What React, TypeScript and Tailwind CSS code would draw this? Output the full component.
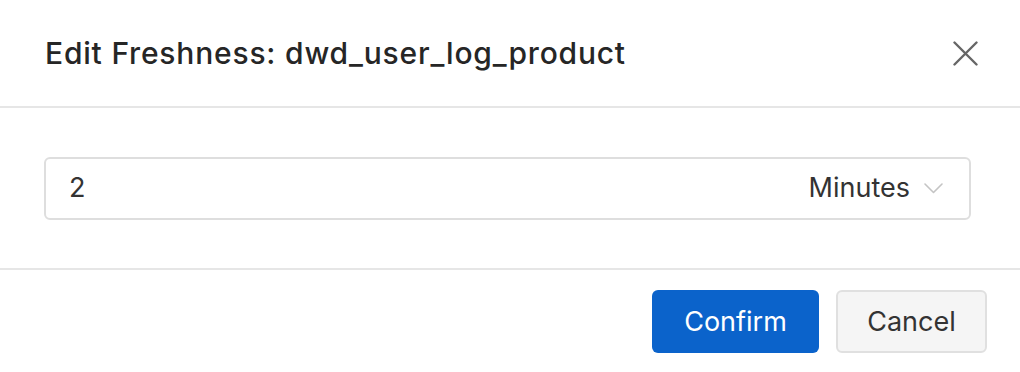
import React from "react";

export default function App() {
  return (
    <div className="w-[1020px] h-[372px] bg-white flex flex-col overflow-hidden" style={{ fontFamily: "Inter, 'Noto Sans', sans-serif" }}>
      <div className="h-[106px] flex items-center justify-between pl-[45px] pr-[42px] border-b-2 border-[#e6e6e6] box-content">
        <h1 className="text-[30px] font-medium text-[#262626] tracking-[0.8px]">Edit Freshness: dwd_user_log_product</h1>
        <svg width="25" height="25" viewBox="0 0 25 25" fill="none" stroke="#666" strokeWidth="2.4" strokeLinecap="round">
          <path d="M1.5 1.5L23.5 23.5M23.5 1.5L1.5 23.5" />
        </svg>
      </div>
      <div className="h-[160px] flex items-center pl-[44px] pr-[49px]">
        <div className="w-full h-[63px] border-2 border-[#dedede] rounded-[6px] flex items-center pl-[23px] pr-[26px]">
          <span className="text-[27px] text-[#333] flex-1 pt-[1px]">2</span>
          <span className="text-[27px] text-[#333] pt-[1px]">Minutes</span>
          <svg className="ml-[14px]" width="19" height="11" viewBox="0 0 19 11" fill="none" stroke="#c4c4c4" strokeWidth="1.6" strokeLinecap="round" strokeLinejoin="round">
            <path d="M1 1L9.5 9.5L18 1" />
          </svg>
        </div>
      </div>
      <div className="border-t-2 border-[#e6e6e6] flex-1 flex justify-end items-start pt-[20px] pr-[33px] gap-[17px]">
        <button className="w-[167px] h-[63px] rounded-[6px] bg-[#0b63cb] text-white text-[27px] pt-[2px]">Confirm</button>
        <button className="w-[151px] h-[63px] rounded-[6px] bg-[#f5f5f5] border-2 border-[#e0e0e0] text-[#333] text-[27px] pt-[2px]">Cancel</button>
      </div>
    </div>
  );
}
